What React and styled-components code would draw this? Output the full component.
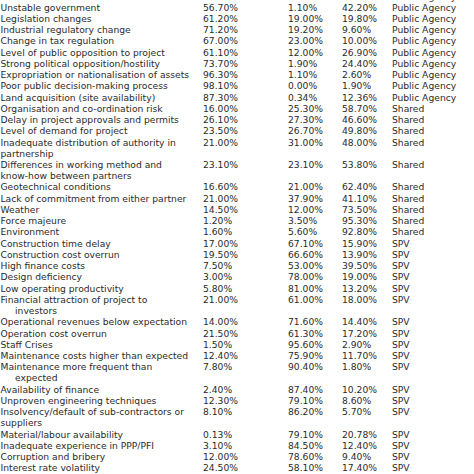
import React from "react";
import styled, { createGlobalStyle } from "styled-components";

const Global = createGlobalStyle`
  html, body { margin: 0; padding: 0; background: #ffffff; }
  #root { width: 474px; height: 474px; overflow: hidden; }
`;

const Viewport = styled.div`
  width: 474px;
  height: 474px;
  overflow: hidden;
  background: #ffffff;
`;

const Table = styled.div`
  display: grid;
  grid-template-columns: 203px 85px 54px 50px auto;
  margin-top: -9.5px;
  font-family: "DejaVu Sans", Verdana, sans-serif;
  font-size: 9.2px;
  line-height: 11.23px;
  color: #2b2b2b;
`;

const Row = styled.div`
  display: contents;
`;

const Cell = styled.div`
  white-space: nowrap;
`;

const NameCell = styled.div`
  white-space: nowrap;
  padding-left: 0.5px;
`;

const Line = styled.div`
  padding-left: ${(p) => (p.$indent ? "14.5px" : "0")};
`;

const rows = [
  ["", "", "", "", "Public Agency"],
  ["Unstable government", "56.70%", "1.10%", "42.20%", "Public Agency"],
  ["Legislation changes", "61.20%", "19.00%", "19.80%", "Public Agency"],
  ["Industrial regulatory change", "71.20%", "19.20%", "9.60%", "Public Agency"],
  ["Change in tax regulation", "67.00%", "23.00%", "10.00%", "Public Agency"],
  ["Level of public opposition to project", "61.10%", "12.00%", "26.90%", "Public Agency"],
  ["Strong political opposition/hostility", "73.70%", "1.90%", "24.40%", "Public Agency"],
  ["Expropriation or nationalisation of assets", "96.30%", "1.10%", "2.60%", "Public Agency"],
  ["Poor public decision-making process", "98.10%", "0.00%", "1.90%", "Public Agency"],
  ["Land acquisition (site availability)", "87.30%", "0.34%", "12.36%", "Public Agency"],
  ["Organisation and co-ordination risk", "16.00%", "25.30%", "58.70%", "Shared"],
  ["Delay in project approvals and permits", "26.10%", "27.30%", "46.60%", "Shared"],
  ["Level of demand for project", "23.50%", "26.70%", "49.80%", "Shared"],
  [["Inadequate distribution of authority in", "partnership"], "21.00%", "31.00%", "48.00%", "Shared"],
  [["Differences in working method and", "know-how between partners"], "23.10%", "23.10%", "53.80%", "Shared"],
  ["Geotechnical conditions", "16.60%", "21.00%", "62.40%", "Shared"],
  ["Lack of commitment from either partner", "21.00%", "37.90%", "41.10%", "Shared"],
  ["Weather", "14.50%", "12.00%", "73.50%", "Shared"],
  ["Force majeure", "1.20%", "3.50%", "95.30%", "Shared"],
  ["Environment", "1.60%", "5.60%", "92.80%", "Shared"],
  ["Construction time delay", "17.00%", "67.10%", "15.90%", "SPV"],
  ["Construction cost overrun", "19.50%", "66.60%", "13.90%", "SPV"],
  ["High finance costs", "7.50%", "53.00%", "39.50%", "SPV"],
  ["Design deficiency", "3.00%", "78.00%", "19.00%", "SPV"],
  ["Low operating productivity", "5.80%", "81.00%", "13.20%", "SPV"],
  [["Financial attraction of project to", "investors"], "21.00%", "61.00%", "18.00%", "SPV", true],
  ["Operational revenues below expectation", "14.00%", "71.60%", "14.40%", "SPV"],
  ["Operation cost overrun", "21.50%", "61.30%", "17.20%", "SPV"],
  ["Staff Crises", "1.50%", "95.60%", "2.90%", "SPV"],
  ["Maintenance costs higher than expected", "12.40%", "75.90%", "11.70%", "SPV"],
  [["Maintenance more frequent than", "expected"], "7.80%", "90.40%", "1.80%", "SPV", true],
  ["Availability of finance", "2.40%", "87.40%", "10.20%", "SPV"],
  ["Unproven engineering techniques", "12.30%", "79.10%", "8.60%", "SPV"],
  [["Insolvency/default of sub-contractors or", "suppliers"], "8.10%", "86.20%", "5.70%", "SPV"],
  ["Material/labour availability", "0.13%", "79.10%", "20.78%", "SPV"],
  ["Inadequate experience in PPP/PFI", "3.10%", "84.50%", "12.40%", "SPV"],
  ["Corruption and bribery", "12.00%", "78.60%", "9.40%", "SPV"],
  ["Interest rate volatility", "24.50%", "58.10%", "17.40%", "SPV"],
  ["", "", "", "", ""],
];

export default function App() {
  return (
    <Viewport>
      <Global />
      <Table>
        {rows.map(([name, a, b, c, owner, indent], i) => {
          const lines = Array.isArray(name) ? name : [name];
          return (
            <Row key={i}>
              <NameCell>
                {lines.map((l, j) => (
                  <Line key={j} $indent={indent && j > 0}>
                    {l || "\u00a0"}
                  </Line>
                ))}
              </NameCell>
              <Cell>{a}</Cell>
              <Cell>{b}</Cell>
              <Cell>{c}</Cell>
              <Cell>{owner}</Cell>
            </Row>
          );
        })}
      </Table>
    </Viewport>
  );
}
